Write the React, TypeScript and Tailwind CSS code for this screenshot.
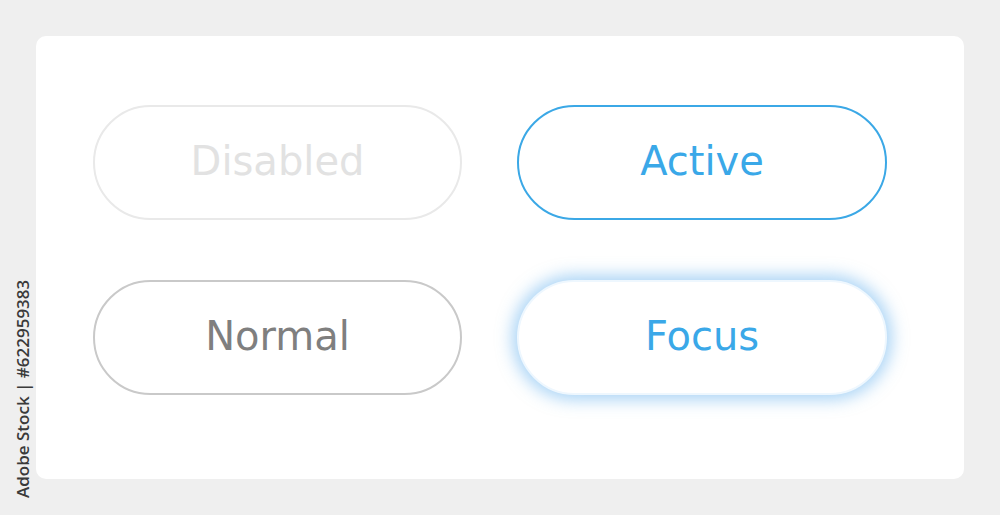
import React from "react";

type Variant = "disabled" | "active" | "normal" | "focus";

const styles: Record<Variant, string> = {
  disabled: "border-2 border-[#e9e9e9] text-[#e2e2e2]",
  active: "border-2 border-[#3ba8e6] text-[#3aa8e8]",
  normal: "border-2 border-[#c9c9c9] text-[#7f7f7f]",
  focus:
    "border-2 border-[#eef7fe] text-[#3aa8e8] shadow-[0_0_16px_5px_rgba(90,172,238,0.5)]",
};

function StateButton({ label, variant }: { label: string; variant: Variant }) {
  return (
    <button
      type="button"
      className={`flex h-[115px] items-center justify-center rounded-full bg-white pb-[4px] text-[40px] leading-none ${styles[variant]}`}
      style={{ fontFamily: '"DejaVu Sans", "Open Sans", sans-serif' }}
    >
      {label}
    </button>
  );
}

export default function App() {
  return (
    <div className="relative h-[515px] w-[1000px] bg-[#efefef] pl-[36px] pt-[36px]">
      <div className="h-[443px] w-[928px] rounded-[10px] bg-white pl-[57px] pt-[69px]">
        <div className="grid grid-cols-[369px_370px] gap-x-[55px] gap-y-[60px]">
          <StateButton label="Disabled" variant="disabled" />
          <StateButton label="Active" variant="active" />
          <StateButton label="Normal" variant="normal" />
          <StateButton label="Focus" variant="focus" />
        </div>
      </div>
      <div
        className="absolute left-[13px] top-[498px] origin-top-left -rotate-90 whitespace-nowrap text-[17px] font-semibold leading-[20px] text-[#3a3a3a]"
        style={{ fontFamily: '"Open Sans", "Liberation Sans", sans-serif' }}
      >
        Adobe Stock | #622959383
      </div>
    </div>
  );
}
